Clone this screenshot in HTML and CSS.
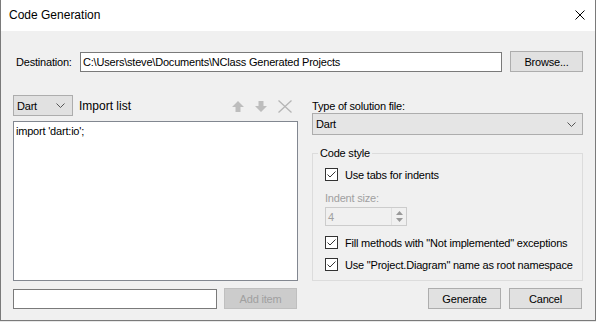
FILE: index.html
```html
<!DOCTYPE html>
<html>
<head>
<meta charset="utf-8">
<link rel="stylesheet" href="styles.css">
</head>
<body>
<div class="window">
  <div class="titlebar">
    <span class="title">Code Generation</span>
    <svg class="close" width="10" height="10" viewBox="0 0 10 10"><path d="M0.5 0.5L9.5 9.5M9.5 0.5L0.5 9.5" stroke="#000" stroke-width="1" fill="none"/></svg>
  </div>
  <div class="content">
    <div class="dest-row">
      <span class="dest-label">Destination:</span>
      <div class="textbox dest-input">C:\Users\steve\Documents\NClass Generated Projects</div>
      <div class="button browse">Browse...</div>
    </div>
    <div class="main">
      <div class="left-col">
        <div class="list-header">
          <div class="combo small-combo"><span>Dart</span>
            <svg class="chev" width="9" height="5" viewBox="0 0 9 5"><polyline points="0.5,0.5 4.5,4.5 8.5,0.5" stroke="#555" fill="none"/></svg>
          </div>
          <span class="import-label">Import list</span>
          <div class="tools">
            <svg width="12" height="11" viewBox="0 0 12 11"><polygon points="6,0 12,6 8.5,6 8.5,11 3.5,11 3.5,6 0,6" fill="#bdbdbd"/></svg>
            <svg width="12" height="11" viewBox="0 0 12 11"><polygon points="6,11 12,5 8.5,5 8.5,0 3.5,0 3.5,5 0,5" fill="#bdbdbd"/></svg>
            <svg width="14" height="13" viewBox="0 0 14 13"><path d="M0.5 0.5L13.5 12.5M13.5 0.5L0.5 12.5" stroke="#b5b5b5" stroke-width="1.3" fill="none"/></svg>
          </div>
        </div>
        <div class="textarea">import 'dart:io';</div>
        <div class="add-row">
          <div class="textbox add-input"></div>
          <div class="button disabled add-btn">Add item</div>
        </div>
      </div>
      <div class="right-col">
        <div class="type-label">Type of solution file:</div>
        <div class="combo big-combo"><span>Dart</span>
          <svg class="chev" width="9" height="5" viewBox="0 0 9 5"><polyline points="0.5,0.5 4.5,4.5 8.5,0.5" stroke="#555" fill="none"/></svg>
        </div>
        <fieldset class="group">
          <legend>Code style</legend>
          <div class="check-row first">
            <span class="checkbox"><svg width="11" height="11" viewBox="0 0 11 11"><polyline points="1.5,5.5 4,8 9.5,2.5" stroke="#333" stroke-width="1" fill="none"/></svg></span>
            <span>Use tabs for indents</span>
          </div>
          <div class="indent-label">Indent size:</div>
          <div class="spin">
            <span class="spin-value">4</span>
            <div class="spin-btns">
              <svg width="7" height="4" viewBox="0 0 7 4"><polygon points="3.5,0 7,4 0,4" fill="#999"/></svg>
              <svg width="7" height="4" viewBox="0 0 7 4"><polygon points="0,0 7,0 3.5,4" fill="#999"/></svg>
            </div>
          </div>
          <div class="check-row second">
            <span class="checkbox"><svg width="11" height="11" viewBox="0 0 11 11"><polyline points="1.5,5.5 4,8 9.5,2.5" stroke="#333" stroke-width="1" fill="none"/></svg></span>
            <span>Fill methods with "Not implemented" exceptions</span>
          </div>
          <div class="check-row third">
            <span class="checkbox"><svg width="11" height="11" viewBox="0 0 11 11"><polyline points="1.5,5.5 4,8 9.5,2.5" stroke="#333" stroke-width="1" fill="none"/></svg></span>
            <span>Use "Project.Diagram" name as root namespace</span>
          </div>
        </fieldset>
        <div class="action-row">
          <div class="button">Generate</div>
          <div class="button">Cancel</div>
        </div>
      </div>
    </div>
  </div>
</div>
</body>
</html>
```
FILE: styles.css
```css
* { box-sizing: border-box; }
html, body { margin: 0; padding: 0; }
body {
  width: 596px;
  height: 322px;
  background: #e8e8e8;
  font-family: "Liberation Sans", Arial, sans-serif;
  font-size: 11px;
  letter-spacing: -0.2px;
  color: #000;
  overflow: hidden;
}
.window {
  width: 596px;
  height: 321px;
  border-left: 1px solid #7a7a7a;
  border-right: 1px solid #7a7a7a;
  border-bottom: 1px solid #7a7a7a;
  background: #f0f0f0;
  display: flex;
  flex-direction: column;
}
.titlebar {
  height: 31px;
  background: #fff;
  display: flex;
  align-items: center;
  justify-content: space-between;
  padding: 0 10px 1px 8px;
}
.title { font-size: 12px; letter-spacing: 0; }
.close { margin-top: -1px; }
.content {
  padding: 20px 12px 0 12px;
}
.dest-row {
  display: flex;
  align-items: center;
  height: 21px;
}
.dest-label { flex: 1; padding-left: 3px; }
.textbox {
  background: #fff;
  border: 1px solid #7a7a7a;
  height: 20px;
  line-height: 18px;
  padding-left: 2px;
  white-space: nowrap;
  overflow: hidden;
}
.dest-input { width: 422px; }
.button {
  width: 73px;
  height: 21px;
  background: #e1e1e1;
  border: 1px solid #adadad;
  display: flex;
  align-items: center;
  justify-content: center;
}
.browse { margin-left: 8px; }
.button.disabled {
  background: #cccccc;
  border-color: #bfbfbf;
  color: #a0a0a0;
}
.main {
  margin-top: 23px;
  display: flex;
  gap: 14px;
}
.left-col { width: 285px; display: flex; flex-direction: column; }
.list-header {
  height: 21px;
  display: flex;
  align-items: center;
}
.combo {
  background: #e1e1e1;
  border: 1px solid #adadad;
  display: flex;
  align-items: center;
  justify-content: space-between;
}
.small-combo {
  width: 60px;
  height: 21px;
  padding: 0 7px 0 3px;
}
.import-label { font-size: 12px; letter-spacing: 0; margin-left: 6px; flex: 1; }
.tools {
  display: flex;
  align-items: center;
  gap: 11px;
  margin-right: 6px;
  margin-top: 2px;
}
.textarea {
  margin-top: 5px;
  height: 160px;
  background: #fff;
  border: 1px solid #828790;
  padding: 3px 2px;
}
.add-row {
  margin-top: 7px;
  display: flex;
  align-items: flex-start;
}
.add-input { width: 204px; margin-top: 1px; }
.add-btn { margin-left: 7px; }
.right-col { width: 271px; display: flex; flex-direction: column; }
.type-label { margin-top: 5px; line-height: 13px; }
.big-combo {
  margin-top: 0px;
  height: 22px;
  padding: 0 6px 0 3px;
  border-color: #adadad;
  background: #e5e5e5;
}
.group {
  margin: 12px 0 0 0;
  padding: 0 0 0 12px;
  border: 1px solid #dcdcdc;
  height: 134px;
}
.group legend {
  padding: 0 2px;
  margin-left: -7px;
  line-height: 13px;
}
.check-row {
  display: flex;
  align-items: center;
  height: 13px;
  gap: 7px;
}
.check-row.first { margin-top: 8px; }
.check-row.second { margin-top: 10px; }
.check-row.third { margin-top: 9px; }
.checkbox {
  width: 13px;
  height: 13px;
  border: 1px solid #333;
  background: #fff;
  display: flex;
}
.indent-label {
  margin-top: 11px;
  line-height: 13px;
  color: #a0a0a0;
}
.spin {
  margin-top: 2px;
  width: 82px;
  height: 19px;
  border: 1px solid #cccccc;
  background: #f0f0f0;
  display: flex;
  align-items: center;
  justify-content: space-between;
  color: #a0a0a0;
}
.spin-value { padding-left: 2px; }
.spin-btns {
  width: 15px;
  height: 17px;
  display: flex;
  flex-direction: column;
  align-items: center;
  justify-content: space-around;
  border-left: 1px solid #e0e0e0;
  padding: 2px 0;
}
.action-row {
  margin-top: 7px;
  display: flex;
  justify-content: flex-end;
  gap: 8px;
  padding-right: 1px;
}
```
